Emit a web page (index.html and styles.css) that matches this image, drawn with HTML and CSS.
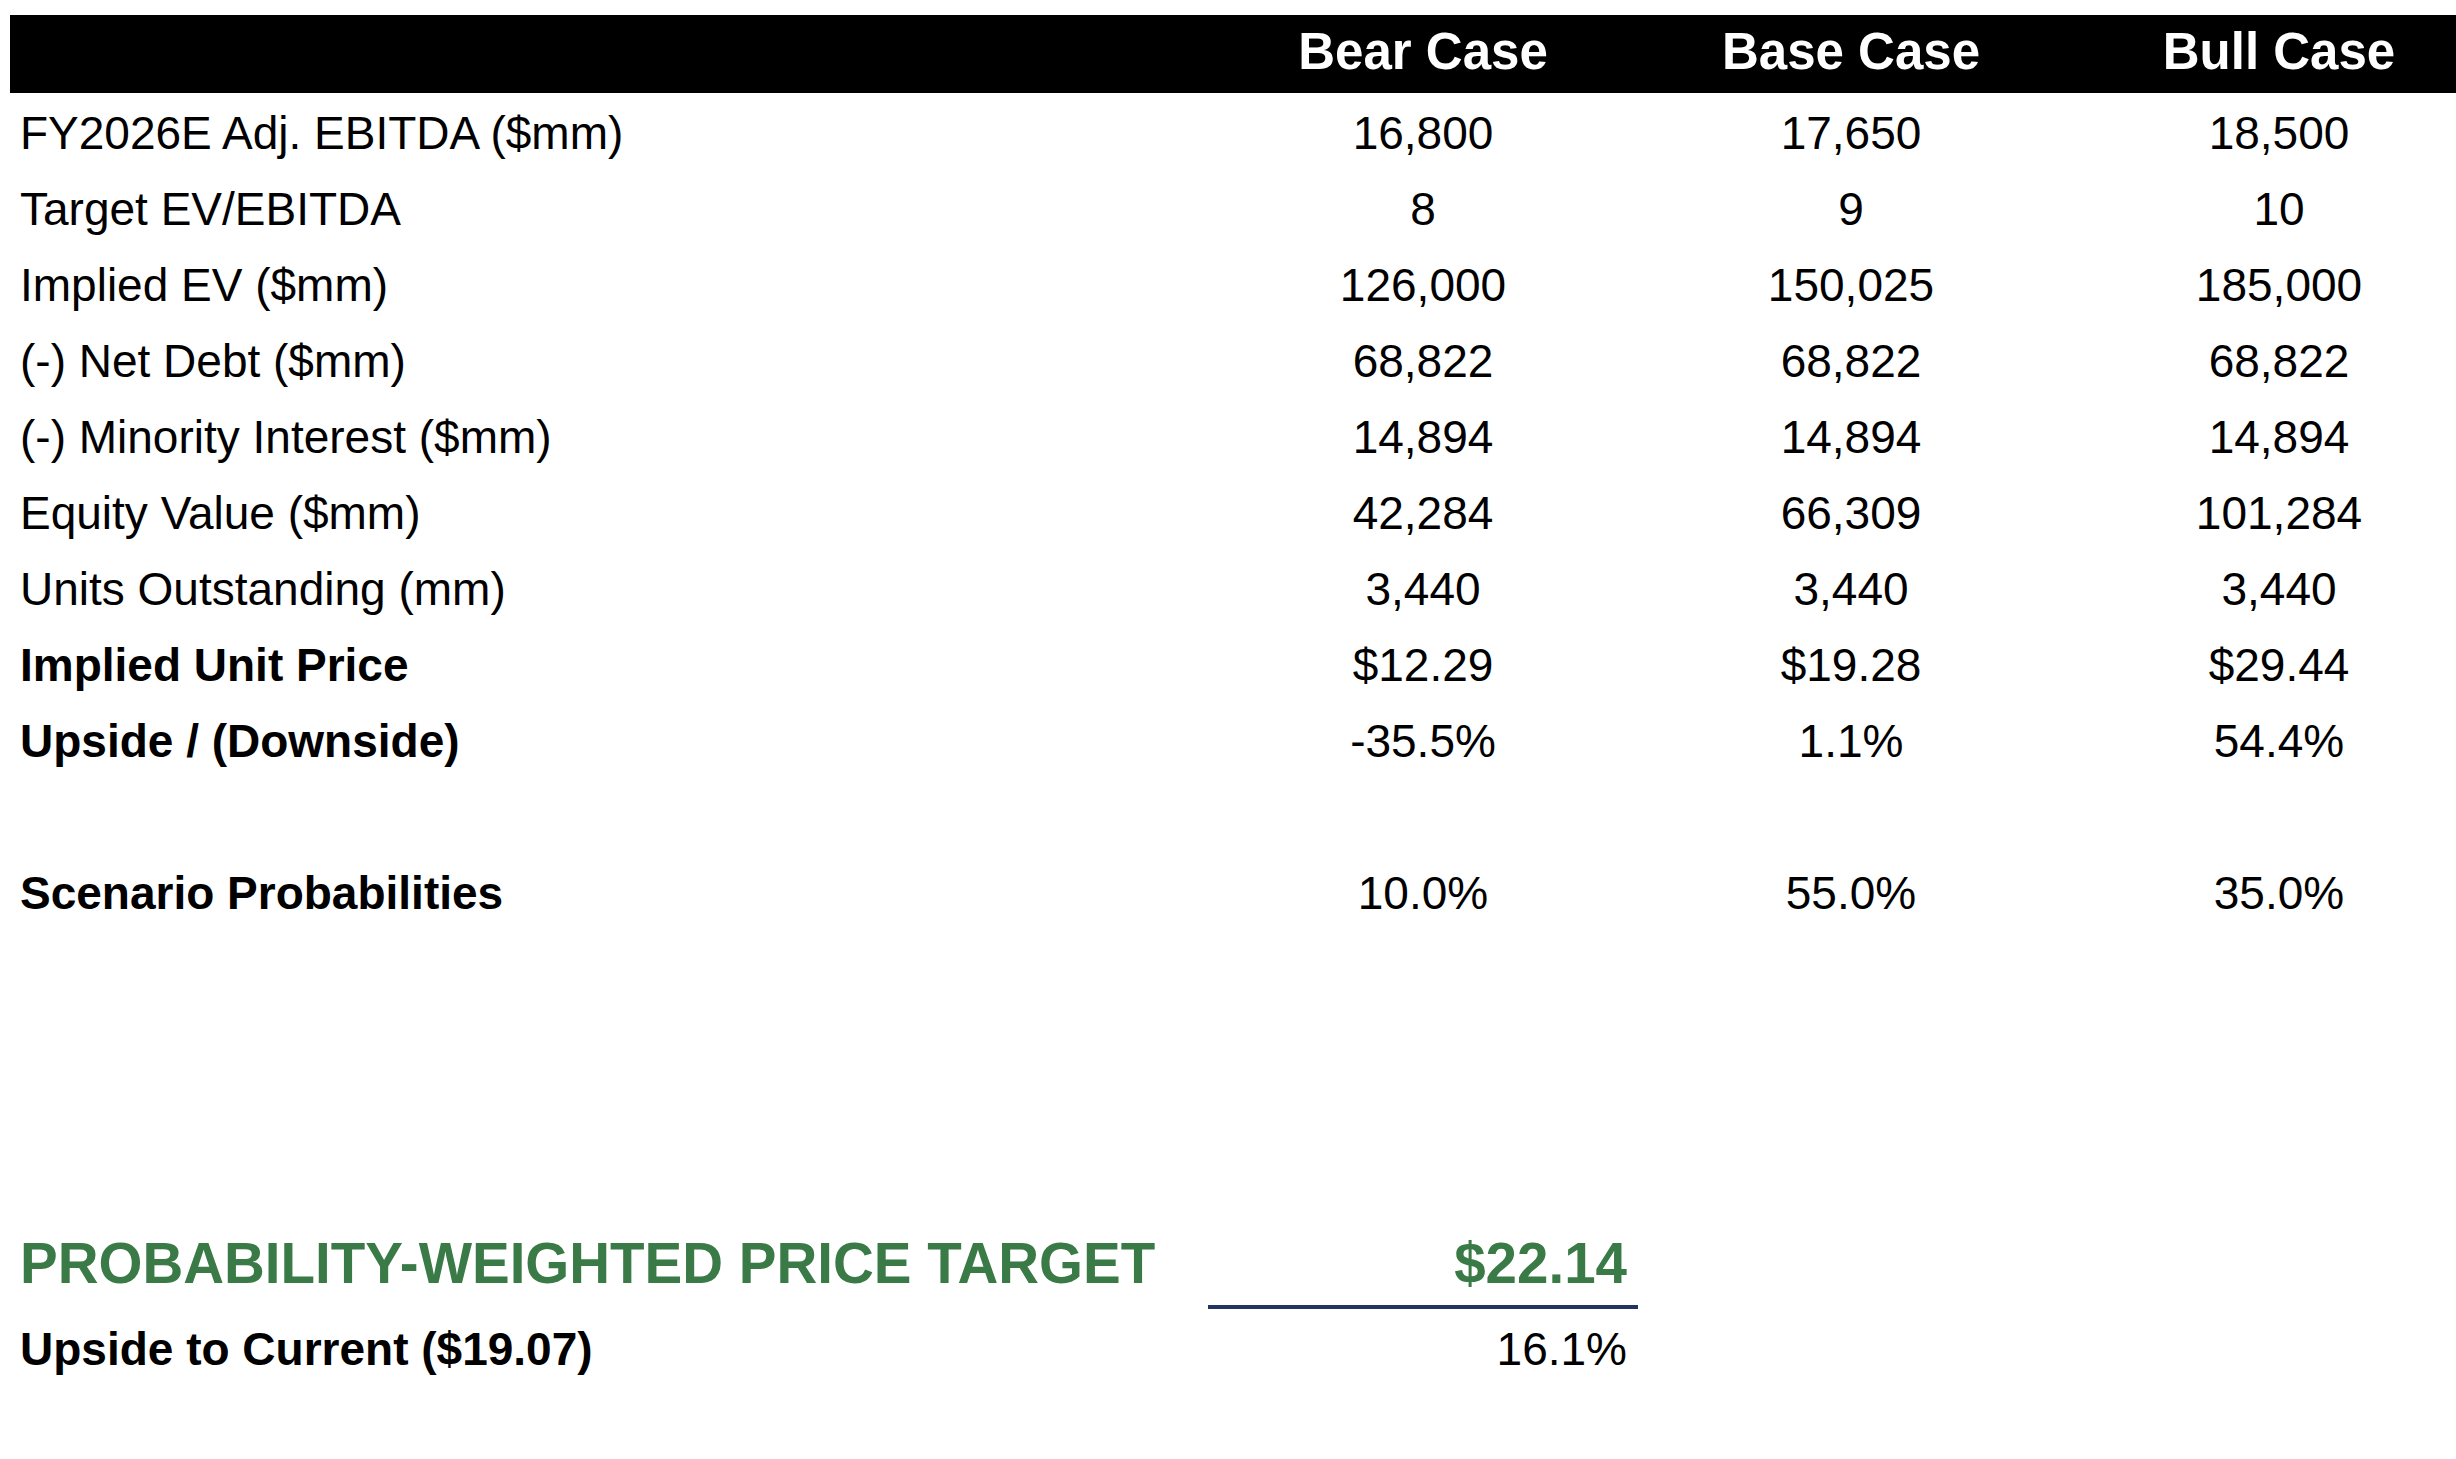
FILE: index.html
```html
<!DOCTYPE html>
<html lang="en">
<head>
<meta charset="utf-8">
<title>Scenario Valuation</title>
<link rel="stylesheet" href="styles.css">
</head>
<body>
<div class="sheet">
  <div class="row head">
    <div class="lbl"></div>
    <div class="val">Bear Case</div>
    <div class="val">Base Case</div>
    <div class="val">Bull Case</div>
  </div>
  <div class="body">
    <div class="row"><div class="lbl">FY2026E Adj. EBITDA ($mm)</div><div class="val">16,800</div><div class="val">17,650</div><div class="val">18,500</div></div>
    <div class="row"><div class="lbl">Target EV/EBITDA</div><div class="val">8</div><div class="val">9</div><div class="val">10</div></div>
    <div class="row"><div class="lbl">Implied EV ($mm)</div><div class="val">126,000</div><div class="val">150,025</div><div class="val">185,000</div></div>
    <div class="row"><div class="lbl">(-) Net Debt ($mm)</div><div class="val">68,822</div><div class="val">68,822</div><div class="val">68,822</div></div>
    <div class="row"><div class="lbl">(-) Minority Interest ($mm)</div><div class="val">14,894</div><div class="val">14,894</div><div class="val">14,894</div></div>
    <div class="row"><div class="lbl">Equity Value ($mm)</div><div class="val">42,284</div><div class="val">66,309</div><div class="val">101,284</div></div>
    <div class="row"><div class="lbl">Units Outstanding (mm)</div><div class="val">3,440</div><div class="val">3,440</div><div class="val">3,440</div></div>
    <div class="row"><div class="lbl bold">Implied Unit Price</div><div class="val">$12.29</div><div class="val">$19.28</div><div class="val">$29.44</div></div>
    <div class="row"><div class="lbl bold">Upside / (Downside)</div><div class="val">-35.5%</div><div class="val">1.1%</div><div class="val">54.4%</div></div>
    <div class="row spacer"></div>
    <div class="row"><div class="lbl bold">Scenario Probabilities</div><div class="val">10.0%</div><div class="val">55.0%</div><div class="val">35.0%</div></div>
  </div>
  <div class="summary">
    <div class="row target">
      <div class="lbl">PROBABILITY-WEIGHTED PRICE TARGET</div>
      <div class="val">$22.14</div>
    </div>
    <div class="row current">
      <div class="lbl bold">Upside to Current ($19.07)</div>
      <div class="val">16.1%</div>
    </div>
  </div>
</div>
</body>
</html>
```

FILE: styles.css
```css
html, body {
  margin: 0;
  padding: 0;
  background: #ffffff;
  overflow: hidden;
}

body {
  font-family: "Liberation Sans", Arial, Helvetica, sans-serif;
  color: #000000;
  width: 2456px;
  height: 1459px;
}

.sheet {
  padding: 15px 0 0 10px;
  width: 2483px;
}

.row {
  display: grid;
  grid-template-columns: 1199px 428px 428px 428px;
  height: 76px;
  font-size: 46px;
  line-height: 76px;
}

.lbl {
  padding-left: 10px;
  white-space: nowrap;
}

.val {
  text-align: center;
  white-space: nowrap;
}

.bold {
  font-weight: bold;
}

.head {
  background: #000000;
  color: #ffffff;
  font-weight: bold;
  font-size: 51px;
  height: 78px;
  line-height: 73px;
  padding-bottom: 5px;
  box-sizing: border-box;
}

.body {
  padding-top: 2px;
}

.summary {
  margin-top: 298px;
}

.summary .row {
  grid-template-columns: 1198px 430px;
}

.summary .val {
  text-align: right;
  padding-right: 11px;
}

.summary .lbl {
  padding-left: 10px;
}

.target {
  height: auto;
  font-size: 56.5px;
  font-weight: bold;
  color: #3a7a46;
  line-height: 70px;
}

.target .lbl,
.target .val {
  padding-bottom: 6px;
}

.target .val {
  border-bottom: 4px solid #243462;
}

.current {
  margin-top: 2px;
}
```
